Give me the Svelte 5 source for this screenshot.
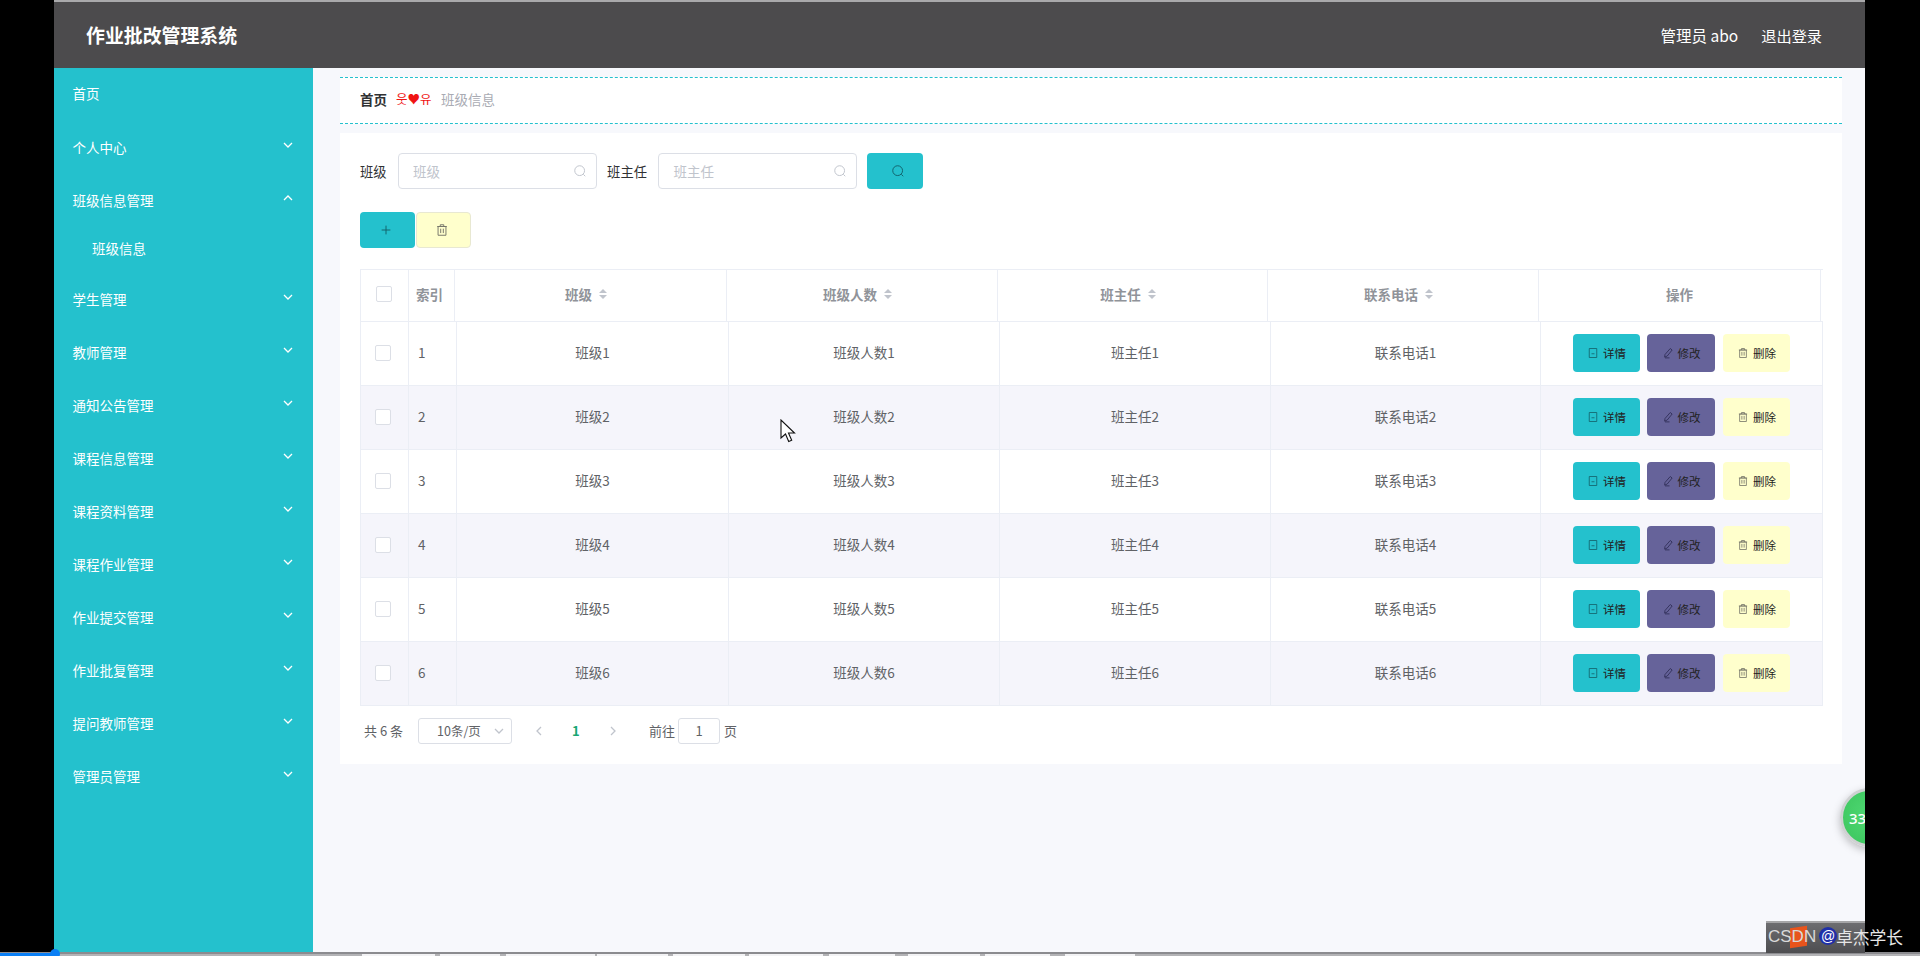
<script lang="ts">
  const menu = [
    { name: '首页', arrow: '' },
    { name: '个人中心', arrow: 'down' },
    { name: '班级信息管理', arrow: 'up', sub: ['班级信息'] },
    { name: '学生管理', arrow: 'down' },
    { name: '教师管理', arrow: 'down' },
    { name: '通知公告管理', arrow: 'down' },
    { name: '课程信息管理', arrow: 'down' },
    { name: '课程资料管理', arrow: 'down' },
    { name: '课程作业管理', arrow: 'down' },
    { name: '作业提交管理', arrow: 'down' },
    { name: '作业批复管理', arrow: 'down' },
    { name: '提问教师管理', arrow: 'down' },
    { name: '管理员管理', arrow: 'down' }
  ];
  const rows = [1, 2, 3, 4, 5, 6];
  const heads = ['班级', '班级人数', '班主任', '联系电话'];
  // taskbar tabs: [left, width]
  const tabs = [[362, 73], [440, 60], [506, 89], [597, 71], [673, 72], [749, 74], [829, 66], [908, 72], [985, 65], [1065, 70]];
</script>

{#snippet searchIcon()}
  <svg class="ico" viewBox="0 0 16 16"><circle cx="7.6" cy="7.6" r="5.6" /><path d="M11.8 11.8 14 14" /></svg>
{/snippet}
{#snippet trashIcon()}
  <svg class="ico" viewBox="0 0 16 16"><path d="M3.5 4h9v10h-9zM2.500 4h11M6 4V2h4v2M6.500 6.500v5M9.500 6.500v5" /></svg>
{/snippet}

<div class="screen">
  <div class="app">
    <header class="top">
      <div class="title">作业批改管理系统</div>
      <div class="user">管理员 abo</div>
      <div class="logout">退出登录</div>
    </header>
    <div class="body">
      <nav class="side">
        {#each menu as item}
          <div class="item">
            <span>{item.name}</span>
            {#if item.arrow}
              <svg class="chev" viewBox="0 0 12 12">
                <path d={item.arrow === 'down' ? 'M2 4l4 4 4-4' : 'M2 8l4-4 4 4'} />
              </svg>
            {/if}
          </div>
          {#if item.sub}
            {#each item.sub as s}
              <div class="subitem">{s}</div>
            {/each}
          {/if}
        {/each}
      </nav>
      <main class="main">
        <div class="crumb">
          <span class="home">首页</span>
          <span class="sep">웃♥유</span>
          <span class="here">班级信息</span>
        </div>
        <section class="card">
          <div class="search">
            <label for="q1">班级</label>
            <div class="input"><input id="q1" placeholder="班级" />{@render searchIcon()}</div>
            <label for="q2">班主任</label>
            <div class="input"><input id="q2" placeholder="班主任" />{@render searchIcon()}</div>
            <button class="btn teal go">{@render searchIcon()}</button>
          </div>
          <div class="tools">
            <button class="btn teal tool">
              <svg class="ico" viewBox="0 0 16 16"><path d="M8 3v10M3 8h10" /></svg>
            </button>
            <button class="btn yellow tool">{@render trashIcon()}</button>
          </div>
          <div class="table">
            <div class="thead">
              <div class="cell"><i class="check"></i></div>
              <div class="cell idx">索引</div>
              {#each heads as h}
                <div class="cell sortable">
                  {h}
                  <span class="caret"><b></b><b></b></span>
                </div>
              {/each}
              <div class="cell">操作</div>
            </div>
            {#each rows as n}
              <div class="row" class:even={n % 2 === 0}>
                <div class="cell pick"><i class="check"></i></div>
                <div class="cell num">{n}</div>
                <div class="cell">班级{n}</div>
                <div class="cell">班级人数{n}</div>
                <div class="cell">班主任{n}</div>
                <div class="cell">联系电话{n}</div>
                <div class="cell actions">
                  <button class="act teal">
                    <svg class="ico" viewBox="0 0 16 16"><path d="M3 2h10v12H3zM6 9h4" /></svg>详情
                  </button>
                  <button class="act purple">
                    <svg class="ico" viewBox="0 0 16 16"><path d="M11 2l2.500 2-6.500 8-3.500 1.500.5-3.500zM4 14.500h6" /></svg>修改
                  </button>
                  <button class="act yellow">{@render trashIcon()}删除</button>
                </div>
              </div>
            {/each}
          </div>
          <div class="pager">
            <span class="total">共 6 条</span>
            <div class="size">10条/页
              <svg class="chev" viewBox="0 0 12 12"><path d="M2 4l4 4 4-4" /></svg>
            </div>
            <svg class="chev nav prev" viewBox="0 0 12 12"><path d="M8 2 4 6l4 4" /></svg>
            <span class="page">1</span>
            <svg class="chev nav next" viewBox="0 0 12 12"><path d="M4 2l4 4-4 4" /></svg>
            <span class="goto">前往</span>
            <div class="jump">1</div>
            <span class="unit">页</span>
          </div>
        </section>
      </main>
    </div>
    <div class="badge">33</div>
  </div>
  <div class="taskbar">
    {#each tabs as [x, w]}
      <i style="left: {x}px; width: {w}px"></i>
    {/each}
  </div>
  <div class="progress"></div>
  <div class="mark">
    <span class="logo"></span>
    <span class="at">@</span>
    <span class="marktext">CSDN</span>
    <span class="marktext who">卓杰学长</span>
  </div>
  <svg class="cursor" viewBox="0 0 16 24">
    <path d="M1 1v18l4.500-4 3.200 7.500 3-1.300-3.200-7.200H14.500z" />
  </svg>
</div>

<style>
  :global(body) { margin: 0; background: #000; }
  .screen {
    position: relative; width: 1920px; height: 956px; overflow: hidden; background: #000;
    font-family: "Noto Sans CJK SC", "Noto Sans", sans-serif; font-size: 13.5px; color: #606266;
  }
  .app { position: relative; margin-left: 54px; width: 1811px; height: 952px; overflow: hidden; background: #f7f8fc; display: flex; flex-direction: column; }
  .ico { width: 14px; height: 14px; fill: none; stroke: currentColor; stroke-width: 1.1; flex: none; }

  .top { height: 66px; flex: none; border-top: 2px solid #a9a9ab; background: #4c4b4d; color: #fff; display: flex; align-items: center; }
  .title { margin-left: 32px; font-size: 18.9px; font-weight: 700; line-height: 1; }
  .user { margin-left: auto; font-size: 15.5px; }
  .logout { margin: 0 43px 0 23px; font-size: 15.2px; }

  .body { flex: 1; display: flex; min-height: 0; }
  .side { width: 259px; flex: none; background: #24c1cd; color: #fff; }
  .item { height: 53px; box-sizing: border-box; display: flex; align-items: center; justify-content: space-between; padding: 0 19px 1px 18.5px; }
  .item:first-child { padding-bottom: 3px; }
  .subitem { height: 46px; box-sizing: border-box; display: flex; align-items: center; padding: 0 0 5px 38px; }
  .chev { width: 12px; height: 12px; fill: none; stroke: currentColor; stroke-width: 1.3; margin-top: -4px; }

  .main { flex: 1; padding: 9px 23px 0 27px; min-width: 0; }
  .crumb { height: 47px; box-sizing: border-box; border-top: 1px dashed #24c1cd; border-bottom: 1px dashed #24c1cd; background: #fff; display: flex; align-items: center; padding: 0 0 4px 20px; }
  .home { color: #303133; font-weight: 700; width: 36px; }
  .sep { color: #f01414; font-family: "Noto Sans CJK KR", sans-serif; font-size: 12.5px; width: 45px; white-space: nowrap; }
  .here { color: #a9abb3; }

  .card { margin-top: 9px; height: 631px; background: #fff; padding: 20px 19px 0 20px; box-sizing: border-box; }
  .search { display: flex; align-items: center; height: 36px; }
  .search label { color: #303133; margin-right: 11.5px; white-space: nowrap; font-size: 13.3px; }
  .input { width: 199px; height: 36px; box-sizing: border-box; border: 1px solid #dcdfe6; border-radius: 4px; display: flex; align-items: center; padding: 0 9px 0 14px; color: #c0c4cc; margin-right: 10px; }
  .input input { flex: 1; min-width: 0; border: 0; outline: 0; padding: 0; font: inherit; background: none; }
  .input input::placeholder { color: #c0c4cc; opacity: 1; }

  .btn { border: 1px solid transparent; border-radius: 4px; padding: 0; display: flex; align-items: center; justify-content: center; box-sizing: border-box; font: inherit; }
  .teal { background: #24c1cd; color: #13626b; }
  .yellow { background: #ffffcc; color: #77776a; }
  .purple { background: #66639a; color: #2c2a52; }
  .go { width: 56px; height: 36px; padding-left: 5px; }
  .tools { display: flex; gap: 1px; margin-top: 23px; }
  .tool { width: 55px; height: 36px; }
  .tools .ico { margin-right: 4px; }
  .tools .yellow { border-color: #e8e8d2; }

  .table { margin-top: 21px; width: 1463px; color: #606266; }
  .thead, .row { display: grid; }
  .thead { grid-template-columns: 48px 46px 272px 271px 270px 271px 283px; height: 52px; color: #909399; font-weight: 700; border-top: 1px solid #ebeef5; box-sizing: border-box; }
  .row { grid-template-columns: 48px 48px 272px 271px 271px 270px 283px; height: 64px; border-top: 1px solid #ebeef5; box-sizing: border-box; }
  .row.even { background: #f5f5fb; }
  .row:last-child { border-bottom: 1px solid #ebeef5; height: 65px; }
  .cell { display: flex; align-items: center; justify-content: center; gap: 7px; border-left: 1px solid #ebeef5; box-sizing: border-box; padding-bottom: 3px; }
  .cell:last-child { border-right: 1px solid #ebeef5; }
  .thead .cell { padding-bottom: 4px; }
  .thead .sortable { padding-right: 9px; }
  .thead .cell:first-child { padding-right: 2px; }
  .pick { padding: 0 4px 1px 0; }
  .idx { justify-content: flex-start; padding-left: 7px; }
  .num { justify-content: flex-start; padding-left: 9px; }
  .check { width: 14px; height: 14px; border: 1px solid #dcdfe6; border-radius: 2px; background: #fff; }
  .caret { display: flex; flex-direction: column; gap: 2px; }
  .caret b { width: 0; height: 0; border: 4px solid transparent; border-top: 0; border-bottom: 4px solid #c0c4cc; }
  .caret b + b { border-bottom: 0; border-top: 4px solid #c0c4cc; }

  .actions { justify-content: flex-start; gap: 7px; padding: 0 0 1px 32px; }
  .act { width: 67px; height: 38px; border: 0; border-radius: 4px; padding: 0; display: flex; align-items: center; justify-content: center; gap: 4px; font: inherit; font-size: 11.5px; }
  .act.teal, .act.purple, .act.yellow { color: #222; }
  .act .ico { width: 12px; height: 12px; color: #13626b; }
  .act.purple { width: 68px; margin-right: 1px; }
  .act.purple .ico { color: #2c2a52; }
  .act.yellow .ico { color: #77776a; }

  .pager { display: flex; align-items: center; height: 26px; margin-top: 12px; padding-left: 4px; font-size: 13px; }
  .total { width: 54px; white-space: nowrap; padding-bottom: 2px; }
  .size { width: 94px; height: 26px; box-sizing: border-box; border: 1px solid #dcdfe6; border-radius: 3px; display: flex; align-items: center; justify-content: space-between; padding: 0 6px 2px 18px; font-size: 12.5px; }
  .size .chev { color: #c0c4cc; margin: 2px 0 0; }
  .nav { margin: 0; color: #c0c4cc; }
  .prev { margin-left: 21px; }
  .page { margin-left: 27px; color: #17a673; font-weight: 700; width: 10px; padding-bottom: 2px; }
  .next { margin-left: 25px; }
  .goto { margin-left: 30px; width: 29px; white-space: nowrap; padding-bottom: 2px; }
  .jump { width: 42px; height: 26px; box-sizing: border-box; border: 1px solid #dcdfe6; border-radius: 3px; display: flex; align-items: center; justify-content: center; padding-bottom: 2px; }
  .unit { margin-left: 4px; padding-bottom: 2px; }

  .badge {
    position: absolute; left: 1786px; top: 788px; width: 59px; height: 59px; box-sizing: border-box;
    border: 3px solid #cfd1d2; border-radius: 50%; background: radial-gradient(circle at 50% 45%, #4fd873, #3bc45c); color: #fff; font: 500 15px "Noto Sans", sans-serif;
    display: flex; align-items: center; padding-left: 6px; box-shadow: 0 3px 8px rgb(0 0 0 / 0.25);
  }

  .taskbar { position: relative; height: 4px; background: linear-gradient(#8b8b8f 0 2px, #b3b3b6 2px); }
  .taskbar i { position: absolute; top: 2px; height: 2px; background: #f3f3f5; }
  .progress { position: absolute; left: 0; top: 953px; width: 54px; height: 3px; background: #0a7ff5; }
  .progress::after { content: ""; position: absolute; right: -6px; top: -4px; width: 10px; height: 10px; border-radius: 50%; background: #0a7ff5; }

  .mark { position: absolute; left: 1766px; top: 921px; width: 99px; height: 32px; background: linear-gradient(#a5a5a7 0 2px, #6d6d70 2px, #4d4d50); }
  .marktext { position: absolute; left: 2px; top: 5px; color: #d9d9d9; font: 17px/22px "Liberation Sans", sans-serif; }
  .who { left: 70px; color: #e6e6e6; font: 16.75px/22px "Noto Sans CJK SC", sans-serif; white-space: nowrap; }
  .logo { position: absolute; left: 24px; top: 6px; width: 17px; height: 20px; background: #e8541c; transform: skewY(-8deg); }
  .at { position: absolute; left: 53px; top: 6px; width: 18px; height: 18px; border-radius: 50%; background: #1f2fa8; color: #fff; font: 14px/18px "Liberation Sans", sans-serif; text-align: center; }

  .cursor { position: absolute; left: 780px; top: 419px; width: 16px; height: 24px; fill: #fff; stroke: #111; stroke-width: 1.1; }
</style>
